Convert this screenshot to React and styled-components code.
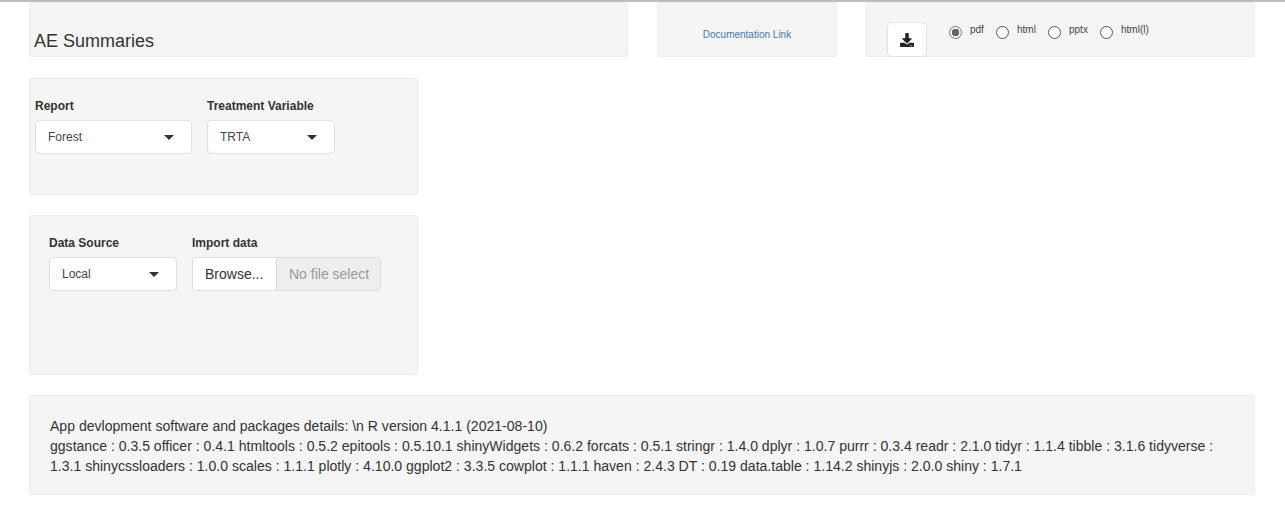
import React from 'react'
import styled, { createGlobalStyle } from 'styled-components'
import { FaDownload } from 'react-icons/fa'

const GlobalStyle = createGlobalStyle`
  html, body {
    margin: 0;
    background: #fff;
  }
  body {
    font-family: 'Liberation Sans', Arial, sans-serif;
    color: #333;
  }
  * {
    box-sizing: border-box;
  }
`

const Page = styled.div`
  width: 1285px;
  height: 526px;
  overflow: hidden;
  border-top: 2px solid #bdbdbd;
  padding: 0 30px 0 29px;
  display: flex;
  flex-direction: column;
`

const Well = styled.div`
  background: #f5f5f5;
  border: 1px solid #ececec;
  border-radius: 3px;
  width: ${(p) => p.$width || 'auto'};
  height: ${(p) => p.$height};
  margin-top: ${(p) => p.$top || '0'};
`

const TopRow = styled.div`
  display: flex;
  gap: 29px;
`

const TitleWell = styled(Well)`
  display: flex;
  align-items: flex-end;
  padding: 0 4px 2px;
`

const Title = styled.h2`
  margin: 0;
  font-size: 18px;
  line-height: 26px;
  font-weight: 400;
`

const LinkWell = styled(Well)`
  display: flex;
  align-items: center;
  justify-content: center;
  padding-top: 9px;
`

const DocLink = styled.a`
  font-size: 10px;
  color: #4a78a8;
  text-decoration: none;
`

const ExportWell = styled(Well)`
  display: flex;
  align-items: flex-start;
  padding: 19px 0 0 20px;
`

const DownloadButton = styled.button`
  width: 40px;
  height: 35px;
  padding: 0;
  display: flex;
  align-items: center;
  justify-content: center;
  background: #fff;
  border: 1px solid #e2e2e2;
  border-radius: 4px;
  color: #222;
  font-size: 14px;
`

const RadioGroup = styled.div`
  display: flex;
  margin: 2px 0 0 22px;
`

const RadioOption = styled.label`
  display: flex;
  align-items: flex-start;
  width: ${(p) => p.$width};
  font-size: 10px;
  line-height: 11px;
  color: #444;
`

const RadioInput = styled.input`
  appearance: none;
  flex-shrink: 0;
  width: 13px;
  height: 13px;
  margin: 2px 8px 0 0;
  background: #fff;
  border: 1px solid #555;
  border-radius: 50%;

  &:checked {
    background: radial-gradient(circle, #666 0 3.5px, #f4f4f4 4px);
    border-color: #777;
  }
`

const FilterWell = styled(Well)`
  display: flex;
  align-items: flex-start;
  gap: 15px;
  padding: ${(p) => p.$padding};
`

const Field = styled.div`
  display: flex;
  flex-direction: column;
  gap: 7px;
`

const FieldLabel = styled.label`
  font-size: 12px;
  line-height: 14px;
  font-weight: 700;
  color: #333;
`

const Select = styled.div`
  display: flex;
  align-items: center;
  justify-content: space-between;
  width: ${(p) => p.$width};
  height: 34px;
  padding: 0 17px 0 12px;
  background: #fff;
  border: 1px solid #e0e0e0;
  border-radius: 4px;
  font-size: 12px;
  color: #444;
`

const Caret = styled.span`
  width: 0;
  height: 0;
  border-left: 5.5px solid transparent;
  border-right: 5.5px solid transparent;
  border-top: 5px solid #333;
`

const FileInput = styled.div`
  display: flex;
  width: 189px;
  height: 34px;
  border: 1px solid #dcdcdc;
  border-radius: 4px;
  overflow: hidden;
  font-size: 14px;
  line-height: 32px;
`

const BrowseButton = styled.span`
  width: 84px;
  padding-left: 12px;
  background: #fff;
  border-right: 1px solid #dcdcdc;
  color: #333;
`

const FileBox = styled.span`
  flex: 1;
  min-width: 0;
  padding: 0 11px 0 12px;
  background: #eee;
`

const FileName = styled.span`
  display: block;
  overflow: hidden;
  white-space: nowrap;
  color: #999;
`

const SummaryWell = styled(Well)`
  padding: 20px 20px;
  font-size: 14.05px;
  line-height: 20px;
  color: #333;
`

const packages =
  'ggstance : 0.3.5 officer : 0.4.1 htmltools : 0.5.2 epitools : 0.5.10.1 shinyWidgets : 0.6.2 forcats : 0.5.1 stringr : 1.4.0 dplyr : 1.0.7 purrr : 0.3.4 readr : 2.1.0 tidyr : 1.1.4 tibble : 3.1.6 tidyverse : 1.3.1 shinycssloaders : 1.0.0 scales : 1.1.1 plotly : 4.10.0 ggplot2 : 3.3.5 cowplot : 1.1.1 haven : 2.4.3 DT : 0.19 data.table : 1.14.2 shinyjs : 2.0.0 shiny : 1.7.1'

const formats = [
  { name: 'pdf', width: '47px', checked: true },
  { name: 'html', width: '52px' },
  { name: 'pptx', width: '52px' },
  { name: 'html(l)', width: '60px' },
]

const App = () => {
  return (
    <>
      <GlobalStyle />
      <Page>
        <TopRow>
          <TitleWell $width='599px' $height='55px'>
            <Title>AE Summaries</Title>
          </TitleWell>
          <LinkWell $width='180px' $height='55px'>
            <DocLink href='#'>Documentation Link</DocLink>
          </LinkWell>
          <ExportWell $width='389px' $height='55px'>
            <DownloadButton aria-label='Download'>
              <FaDownload />
            </DownloadButton>
            <RadioGroup>
              {formats.map((f) => (
                <RadioOption key={f.name} $width={f.width}>
                  <RadioInput
                    type='radio'
                    name='format'
                    defaultChecked={f.checked}
                  />
                  {f.name}
                </RadioOption>
              ))}
            </RadioGroup>
          </ExportWell>
        </TopRow>

        <FilterWell
          $width='389px'
          $height='117px'
          $top='21px'
          $padding='20px 5px 0'
        >
          <Field>
            <FieldLabel>Report</FieldLabel>
            <Select $width='157px'>
              Forest
              <Caret />
            </Select>
          </Field>
          <Field>
            <FieldLabel>Treatment Variable</FieldLabel>
            <Select $width='128px'>
              TRTA
              <Caret />
            </Select>
          </Field>
        </FilterWell>

        <FilterWell
          $width='389px'
          $height='160px'
          $top='20px'
          $padding='20px 19px 0'
        >
          <Field>
            <FieldLabel>Data Source</FieldLabel>
            <Select $width='128px'>
              Local
              <Caret />
            </Select>
          </Field>
          <Field>
            <FieldLabel>Import data</FieldLabel>
            <FileInput>
              <BrowseButton>Browse...</BrowseButton>
              <FileBox>
                <FileName>No file selected</FileName>
              </FileBox>
            </FileInput>
          </Field>
        </FilterWell>

        <SummaryWell $width='1226px' $height='100px' $top='20px'>
          <div>App devlopment software and packages details: \n R version 4.1.1 (2021-08-10)</div>
          <div>{packages}</div>
        </SummaryWell>
      </Page>
    </>
  )
}

export default App
